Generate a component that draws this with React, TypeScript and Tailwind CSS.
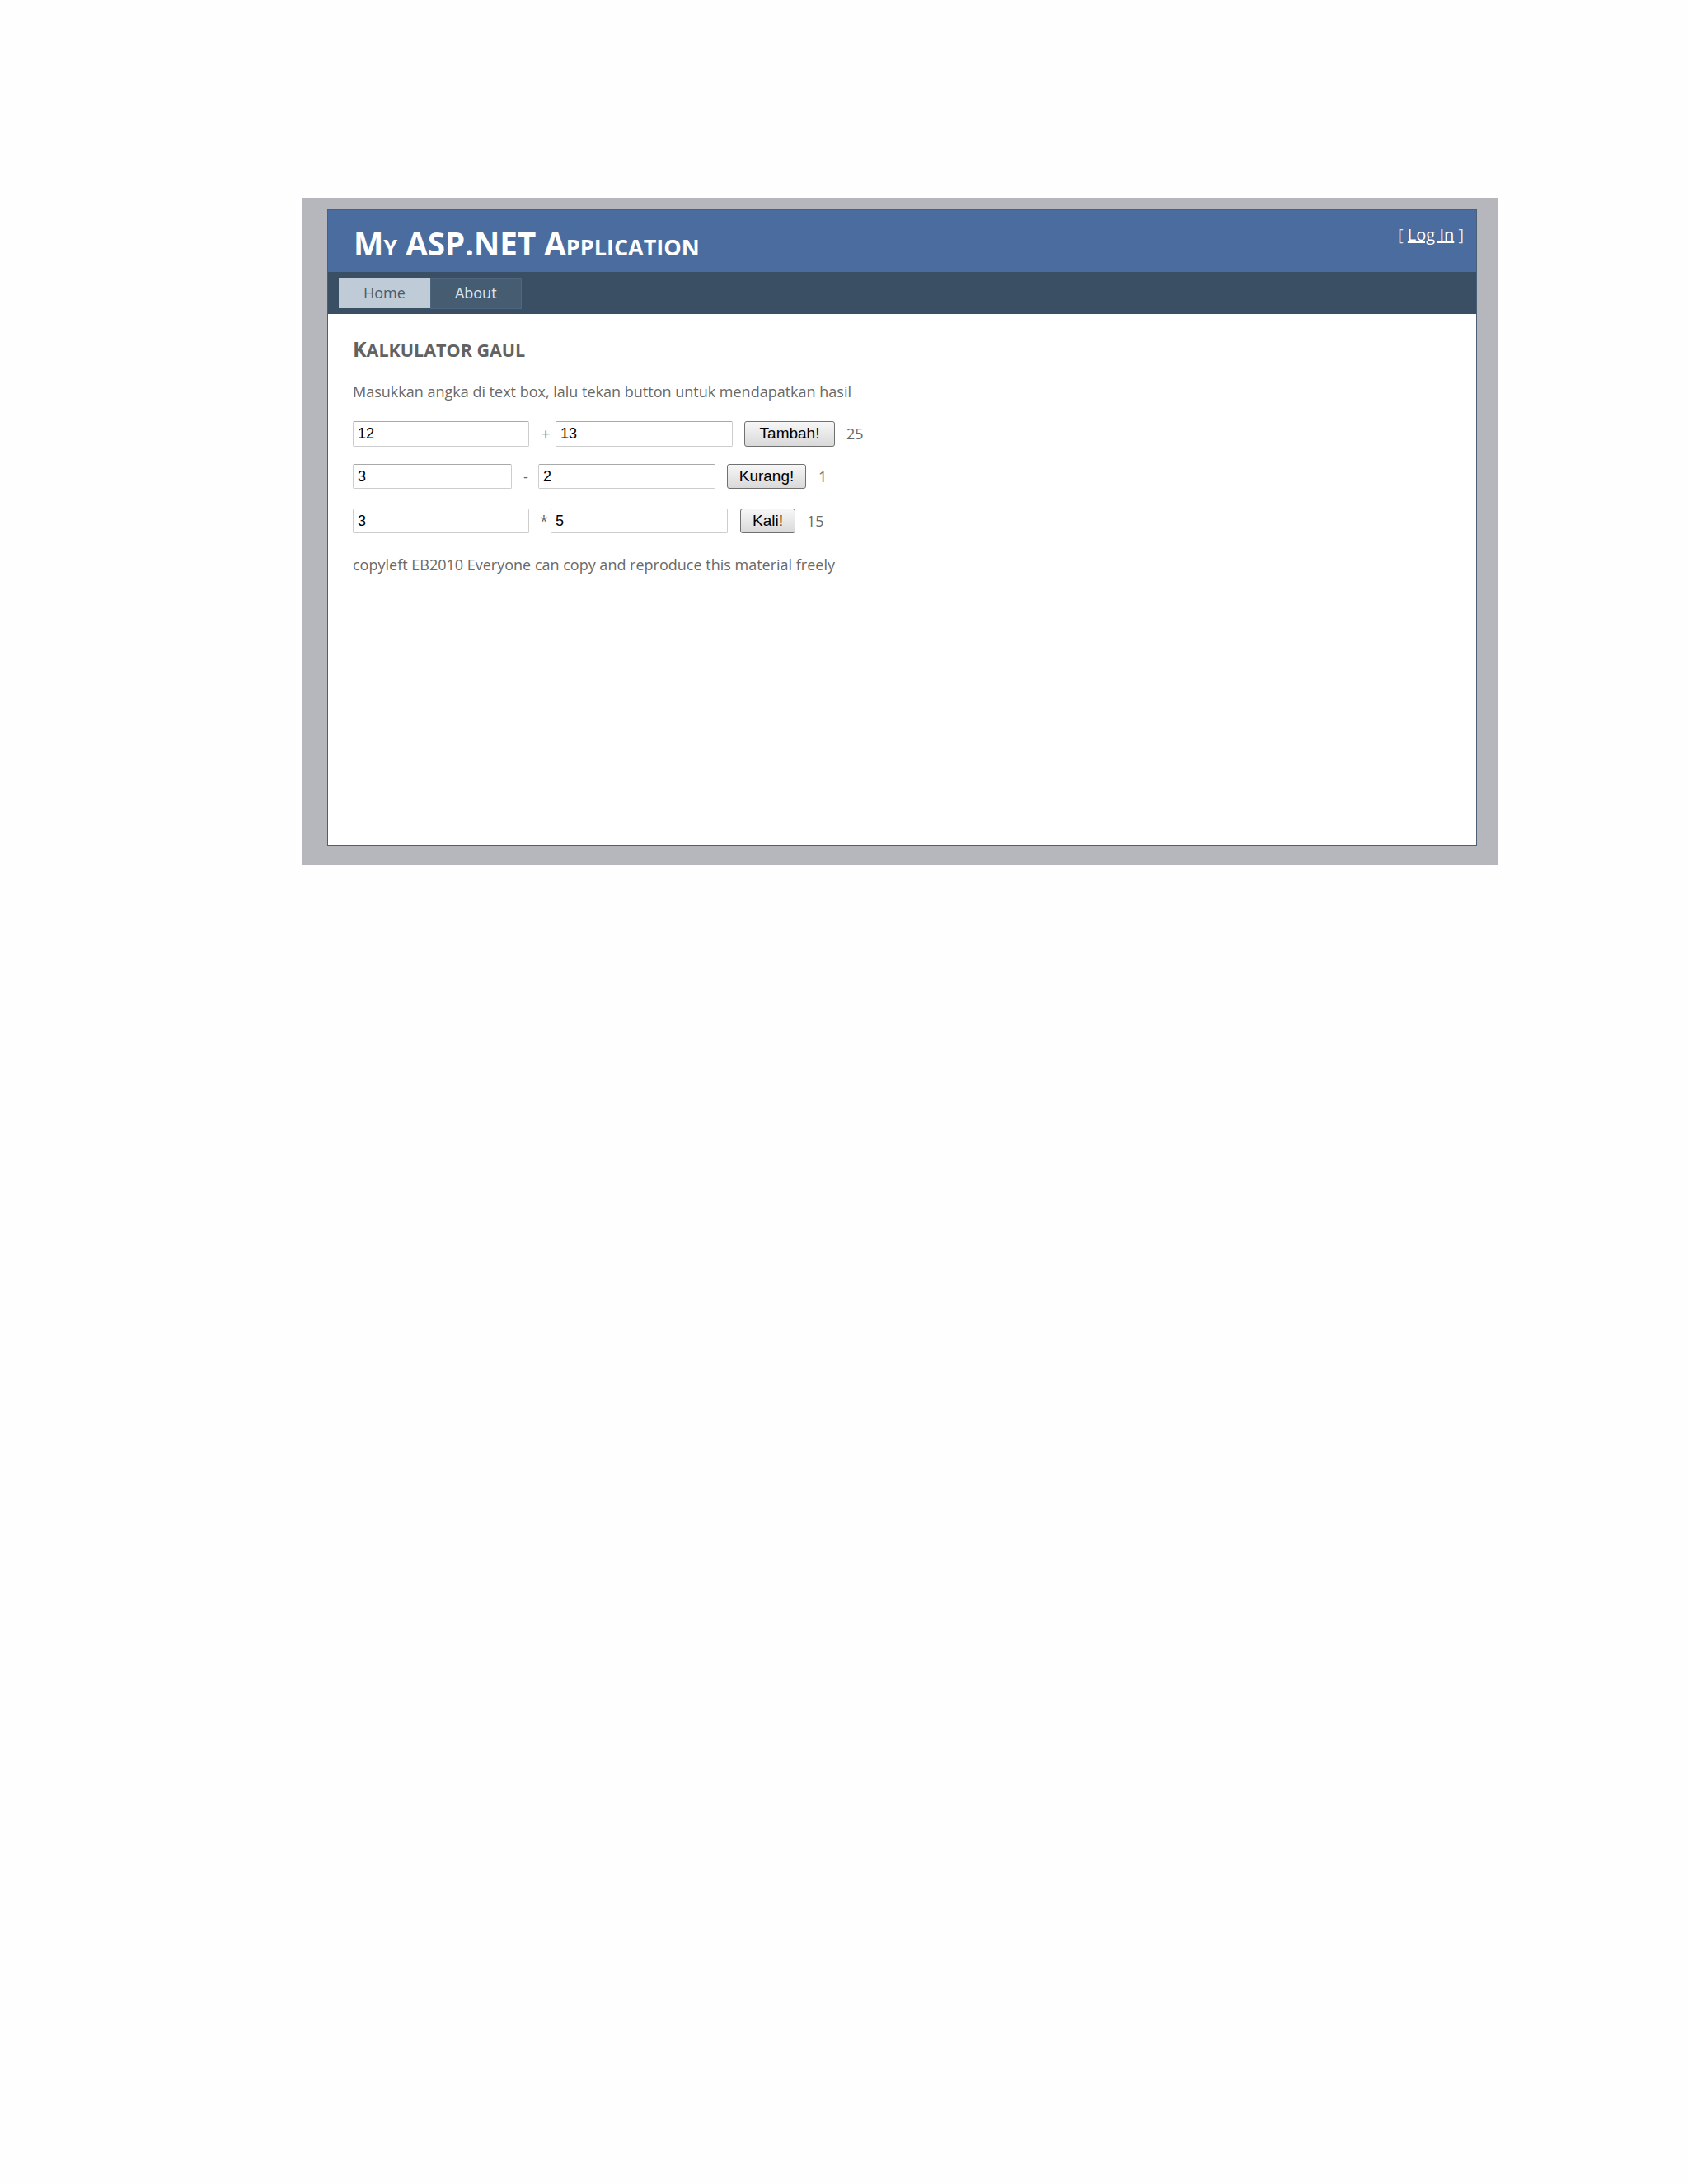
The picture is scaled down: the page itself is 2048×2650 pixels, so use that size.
import React from 'react'

const sans = "font-['Open_Sans',_'Noto_Sans',_sans-serif]"

function TextBox({ value, width }: { value: string; width: string }) {
  return (
    <input
      type="text"
      defaultValue={value}
      className={`${width} h-full rounded-[2px] border border-[#cdcdcd] border-t-[#a9a9a9] bg-white pl-[5px] font-['Liberation_Sans',_Arial,_sans-serif] text-[18px] text-black outline-none`}
    />
  )
}

function CalcButton({ label, width }: { label: string; width: string }) {
  return (
    <button
      type="button"
      className={`${width} h-full rounded-[3px] border border-[#707070] bg-gradient-to-b from-[#f7f7f7] to-[#d9d9d9] font-['Liberation_Sans',_Arial,_sans-serif] text-[19px] text-black`}
    >
      {label}
    </button>
  )
}

export default function App() {
  return (
    <div className="min-h-[2650px] bg-[#fefefe] pt-[240px] pl-[366px]">
      {/* outer gray frame */}
      <div className="w-[1452px] h-[809px] bg-[#b6b7bc] pt-[14px] pl-[31px]">
        <div className={`w-[1395px] h-[772px] border border-[#496077] bg-white flex flex-col ${sans}`}>
          {/* header */}
          <div className="h-[75px] bg-[#4b6c9e] flex justify-between pl-[31px] pr-[15px]">
            <h1 className="pt-[18px] text-[38.5px] leading-[44px] font-bold text-white [font-variant:small-caps]">
              My ASP.NET Application
            </h1>
            <div className="pt-[17px] text-[20px] leading-[26px] text-[#dde4ec]">
              [ <a href="#" className="text-white underline">Log In</a> ]
            </div>
          </div>

          {/* menu */}
          <div className="h-[51px] bg-[#3a4f63] pt-[7px] pl-[13px] flex items-start">
            <a href="#" className="h-[37px] border border-[#bfcbd6] bg-[#bfcbd6] px-[29px] text-[18px] leading-[35px] text-[#465c71]">
              Home
            </a>
            <a href="#" className="h-[38px] border border-[#4e667d] bg-[#465c71] px-[29px] text-[18px] leading-[35px] text-[#dde4ec]">
              About
            </a>
          </div>

          {/* main */}
          <div className="flex-1 pt-[27px] pl-[30px] text-[#696969]">
            <h2 className="h-[30px] text-[25px] leading-[30px] font-bold text-[#626262]">
              K<span className="text-[21.5px] leading-[20px] uppercase">alkulator gaul</span>
            </h2>
            <p className="mt-[25px] text-[18px] leading-[24px]">
              Masukkan angka di text box, lalu tekan button untuk mendapatkan hasil
            </p>

            <div className="mt-[24px] h-[31px] flex items-center text-[18px]">
              <TextBox value="12" width="w-[214px]" />
              <span className="w-[32px] pl-[15px]">+</span>
              <TextBox value="13" width="w-[215px]" />
              <span className="ml-[14px] h-full">
                <CalcButton label="Tambah!" width="w-[110px]" />
              </span>
              <span className="ml-[14px]">25</span>
            </div>

            <div className="mt-[21px] h-[30px] flex items-center text-[18px]">
              <TextBox value="3" width="w-[193px]" />
              <span className="w-[32px] pl-[14px]">-</span>
              <TextBox value="2" width="w-[215px]" />
              <span className="ml-[14px] h-full">
                <CalcButton label="Kurang!" width="w-[96px]" />
              </span>
              <span className="ml-[15px]">1</span>
            </div>

            <div className="mt-[24px] h-[30px] flex items-center text-[18px]">
              <TextBox value="3" width="w-[214px]" />
              <span className="w-[26px] pl-[13px]">*</span>
              <TextBox value="5" width="w-[215px]" />
              <span className="ml-[15px] h-full">
                <CalcButton label="Kali!" width="w-[67px]" />
              </span>
              <span className="ml-[14px]">15</span>
            </div>

            <p className="mt-[26px] text-[18px] leading-[24px]">
              copyleft EB2010 Everyone can copy and reproduce this material freely
            </p>
          </div>
        </div>
      </div>
    </div>
  )
}
